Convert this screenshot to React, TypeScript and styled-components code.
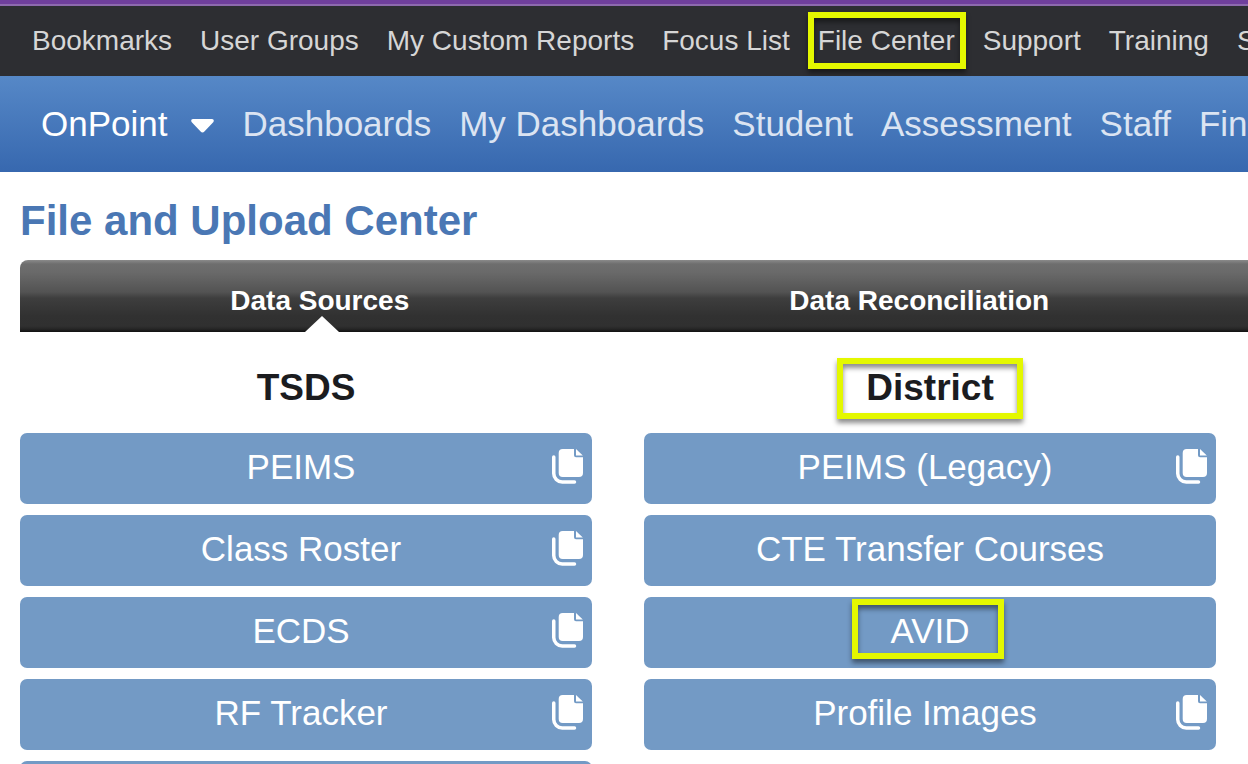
import React from "react";
import styled, { createGlobalStyle, css } from "styled-components";

const GlobalStyle = createGlobalStyle`
  * { box-sizing: border-box; }
  body {
    margin: 0;
    background: #fff;
    font-family: "Liberation Sans", Arial, Helvetica, sans-serif;
  }
`;

const Page = styled.div`
  height: 100vh;
  overflow: hidden;
`;

const UtilityBar = styled.nav`
  display: flex;
  align-items: center;
  gap: 28px;
  height: 76px;
  padding: 2px 0 0 32px;
  border-top: 4px solid #6f3f9c;
  box-shadow: inset 0 2px 0 #8d6aae;
  background: #2d2e32;
  overflow: hidden;
`;

const UtilityLink = styled.a`
  position: relative;
  flex: none;
  color: #d6d6d6;
  font-size: 28px;
  line-height: 32px;
  text-decoration: none;
  white-space: nowrap;
`;

const MainBar = styled.nav`
  display: flex;
  align-items: center;
  gap: 28px;
  height: 96px;
  padding-left: 41px;
  background: linear-gradient(#5688c7, #3768af);
  overflow: hidden;
`;

const navText = css`
  flex: none;
  font-family: inherit;
  font-size: 35px;
  line-height: 40px;
  white-space: nowrap;
`;

const MainLink = styled.a`
  ${navText}
  color: #dbe4f2;
  text-decoration: none;
`;

const BrandButton = styled.button`
  ${navText}
  display: flex;
  align-items: center;
  gap: 24px;
  padding: 0;
  border: 0;
  background: none;
  color: #fff;

  svg {
    margin-top: 4px;
  }
`;

const Title = styled.h1`
  margin: 0;
  padding: 25px 20px 15px;
  color: #4a77b4;
  font-size: 42px;
  line-height: 48px;
`;

const TabBar = styled.div`
  display: grid;
  grid-template-columns: 1fr 1fr;
  height: 72px;
  margin-left: 20px;
  padding-right: 29px;
  border-top-left-radius: 8px;
  background: linear-gradient(
    #8a8a8a 0,
    #6e6e6e 4px,
    #6a6a6a 12px,
    #535353 32px,
    #3e3e3e 38px,
    #313131 56px,
    #303030 66px,
    #262626 69px,
    #111 72px
  );
`;

const Tab = styled.button<{ $active?: boolean }>`
  position: relative;
  padding: 10px 0 0;
  border: 0;
  background: none;
  color: #fff;
  font-family: inherit;
  font-size: 28px;
  font-weight: bold;
  line-height: 32px;
  ${(p) =>
    p.$active &&
    css`
      &::after {
        content: "";
        position: absolute;
        bottom: 0;
        left: 50%;
        margin-left: -15px;
        border: solid transparent;
        border-width: 0 17px 16px;
        border-bottom-color: #fff;
      }
    `}
`;

const Columns = styled.main`
  display: grid;
  grid-template-columns: 1fr 1fr;
  gap: 52px;
  padding: 0 32px 0 20px;
`;

const Column = styled.section`
  display: flex;
  flex-direction: column;
  gap: 11px;
`;

const ColumnTitle = styled.h2`
  margin: 0;
  padding: 35px 0 13px;
  color: #1b1c1f;
  font-size: 37px;
  line-height: 42px;
  text-align: center;
`;

const SourceButton = styled.button`
  display: flex;
  align-items: center;
  width: 100%;
  height: 71px;
  padding: 0 9px 4px;
  border: 0;
  border-radius: 7px;
  background: #739ac5;
  color: #fff;
  font-family: inherit;
  font-size: 35px;
  line-height: 40px;
`;

const SourceLabel = styled.span<{ $withIcon?: boolean }>`
  flex: 1;
  padding-left: ${(p) => (p.$withIcon ? 21 : 0)}px;
  text-align: center;
`;

const Anchor = styled.span`
  position: relative;
`;

const Highlight = styled.span<{ $inset: string }>`
  position: absolute;
  inset: ${(p) => p.$inset};
  border: 6px solid #e4f800;
  box-shadow: 0 4px 5px rgba(0, 0, 0, 0.45), inset 0 4px 5px rgba(0, 0, 0, 0.45);
  pointer-events: none;
`;

const Caret = () => (
  <svg width="23" height="14" viewBox="0 0 23 14" fill="currentColor" aria-hidden="true">
    <path d="M2 0H21C22.8 0 23.3 2 22.2 3.2L13.4 12.6C12.3 13.8 10.7 13.8 9.6 12.6L.8 3.2C-.3 2 .2 0 2 0Z" />
  </svg>
);

const CopyIcon = () => (
  <svg width="31" height="35" viewBox="0 0 31 35" fill="currentColor" aria-hidden="true">
    <path
      d="M1.75 8V24.5a8.5 8.5 0 0 0 8.5 8.5H22.5"
      fill="none"
      stroke="currentColor"
      strokeWidth="3.5"
      strokeLinecap="round"
    />
    <path d="M10.7 0H22V6.2a2 2 0 0 0 2 2H31V24a4 4 0 0 1-4 4H10.7a4 4 0 0 1-4-4V4a4 4 0 0 1 4-4Z" />
    <path d="M24 0L30.8 6.5H24Z" />
  </svg>
);

type Source = { label: string; icon?: boolean; highlight?: string };

const tsds: Source[] = [
  { label: "PEIMS", icon: true },
  { label: "Class Roster", icon: true },
  { label: "ECDS", icon: true },
  { label: "RF Tracker", icon: true },
  { label: "" },
];

const district: Source[] = [
  { label: "PEIMS (Legacy)", icon: true },
  { label: "CTE Transfer Courses" },
  { label: "AVID", highlight: "-12px -34px -9px -38px" },
  { label: "Profile Images", icon: true },
];

const SourceList = ({ items }: { items: Source[] }) => (
  <>
    {items.map((s) => (
      <SourceButton key={s.label} type="button">
        <SourceLabel $withIcon={s.icon}>
          <Anchor>
            {s.label}
            {s.highlight && <Highlight $inset={s.highlight} />}
          </Anchor>
        </SourceLabel>
        {s.icon && <CopyIcon />}
      </SourceButton>
    ))}
  </>
);

const utilityLinks = [
  "Bookmarks",
  "User Groups",
  "My Custom Reports",
  "Focus List",
  "File Center",
  "Support",
  "Training",
  "S",
];

const mainLinks = ["Dashboards", "My Dashboards", "Student", "Assessment", "Staff", "Fin"];

export default function App() {
  return (
    <Page>
      <GlobalStyle />
      <UtilityBar>
        {utilityLinks.map((label) => (
          <UtilityLink key={label} href="#">
            {label}
            {label === "File Center" && <Highlight $inset="-13px -11px -12px -10px" />}
          </UtilityLink>
        ))}
      </UtilityBar>
      <MainBar>
        <BrandButton type="button">
          OnPoint
          <Caret />
        </BrandButton>
        {mainLinks.map((label) => (
          <MainLink key={label} href="#">
            {label}
          </MainLink>
        ))}
      </MainBar>
      <Title>File and Upload Center</Title>
      <TabBar>
        <Tab type="button" $active>
          Data Sources
        </Tab>
        <Tab type="button">Data Reconciliation</Tab>
      </TabBar>
      <Columns>
        <Column>
          <ColumnTitle>TSDS</ColumnTitle>
          <SourceList items={tsds} />
        </Column>
        <Column>
          <ColumnTitle>
            <Anchor>
              District
              <Highlight $inset="-9px -29px -11px -29px" />
            </Anchor>
          </ColumnTitle>
          <SourceList items={district} />
        </Column>
      </Columns>
    </Page>
  );
}
